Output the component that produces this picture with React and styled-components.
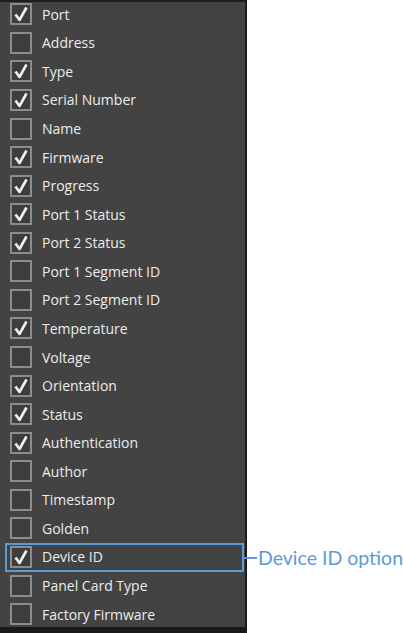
import React from "react";
import styled, { createGlobalStyle } from "styled-components";

const items = [
  ["Port", true],
  ["Address", false],
  ["Type", true],
  ["Serial Number", true],
  ["Name", false],
  ["Firmware", true],
  ["Progress", true],
  ["Port 1 Status", true],
  ["Port 2 Status", true],
  ["Port 1 Segment ID", false],
  ["Port 2 Segment ID", false],
  ["Temperature", true],
  ["Voltage", false],
  ["Orientation", true],
  ["Status", true],
  ["Authentication", true],
  ["Author", false],
  ["Timestamp", false],
  ["Golden", false],
  ["Device ID", true],
  ["Panel Card Type", false],
  ["Factory Firmware", false],
];

export default function App() {
  return (
    <>
      <GlobalStyle />
      <Page>
        <Panel>
          {items.map(([label, checked]) => (
            <Row key={label}>
              <Box>{checked && <Check />}</Box>
              <Label>{label}</Label>
            </Row>
          ))}
        </Panel>
        <Callout>
          <Highlight />
          <Connector />
          <CalloutText>Device ID option</CalloutText>
        </Callout>
      </Page>
    </>
  );
}

function Check() {
  return (
    <svg width="18" height="18" viewBox="0 0 18 18">
      <path
        d="M3.5 9.5 L7.5 15 L14.5 2.5"
        fill="none"
        stroke="#f2f2f2"
        strokeWidth="2.6"
        strokeLinejoin="round"
      />
    </svg>
  );
}

const GlobalStyle = createGlobalStyle`
  html, body {
    margin: 0;
    padding: 0;
    background: #ffffff;
    overflow: hidden;
  }
`;

const Page = styled.div`
  position: relative;
  width: 403px;
  height: 633px;
  overflow: hidden;
`;

const Panel = styled.div`
  box-sizing: border-box;
  width: 247px;
  height: 633px;
  background: #434343;
  box-shadow: inset 0 2px 0 #1e1e1e;
  border-right: 2px solid #1c1c1c;
  border-bottom: 6px solid #1a1a1a;
  display: flex;
  flex-direction: column;
`;

const Row = styled.div`
  flex: 0 0 28.57px;
  display: flex;
  align-items: center;
  padding-left: 10px;
  gap: 10px;
`;

const Box = styled.div`
  box-sizing: border-box;
  width: 22px;
  height: 22px;
  border: 2px solid #8c8c8c;
  background: #3d3d3d;
  display: flex;
  align-items: center;
  justify-content: center;
`;

const Label = styled.span`
  font-family: "Open Sans", "DejaVu Sans", sans-serif;
  font-size: 14px;
  color: #ececec;
  white-space: nowrap;
`;

const Callout = styled.div`
  position: absolute;
  left: 5px;
  top: 543px;
  display: flex;
  align-items: center;
  height: 29px;
`;

const Highlight = styled.div`
  box-sizing: border-box;
  width: 239px;
  height: 29px;
  border: 2px solid #5b9bd5;
`;

const Connector = styled.div`
  width: 13px;
  height: 2px;
  background: #5b9bd5;
`;

const CalloutText = styled.span`
  font-family: Lato, "Open Sans", sans-serif;
  font-size: 19.5px;
  color: #5b9bd5;
  white-space: nowrap;
  margin-left: 1px;
`;
